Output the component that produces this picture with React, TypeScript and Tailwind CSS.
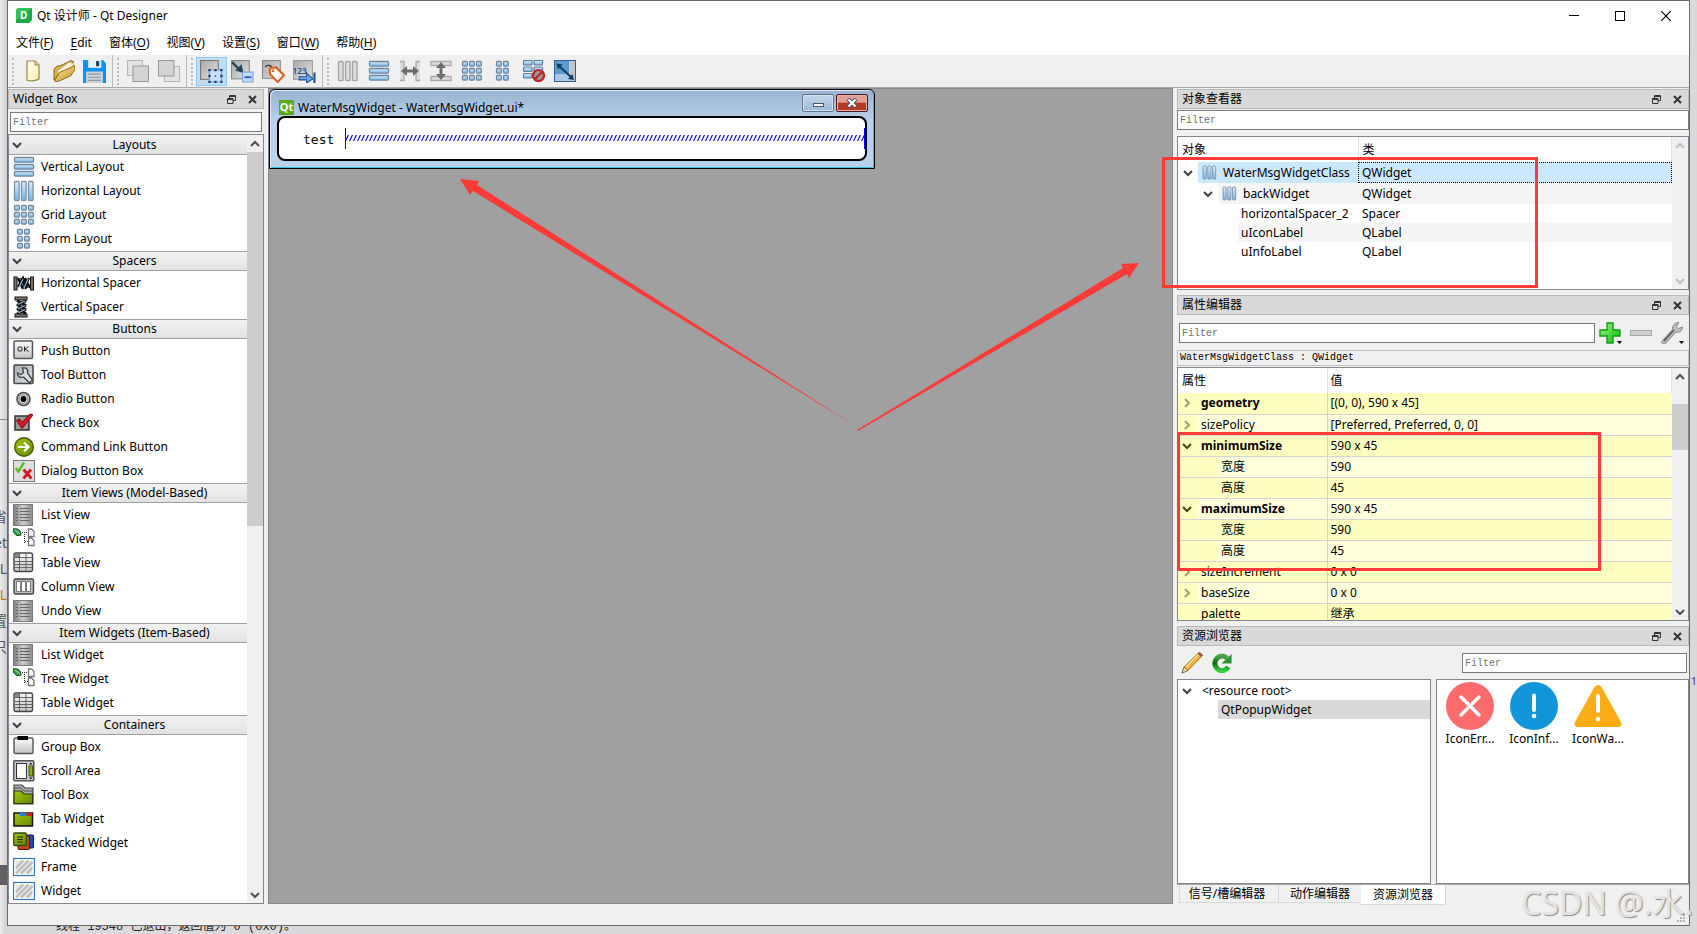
import React from "react";

const RED = "#fc3a38";

// Gradients shared by all the icons
const IconDefs = () => (
  <svg width="0" height="0" className="absolute" aria-hidden="true">
    <defs>
      <linearGradient id="blueBar" x1="0" y1="0" x2="0" y2="1">
        <stop offset="0%" stopColor="#dcf0fd" />
        <stop offset="100%" stopColor="#78b4e0" />
      </linearGradient>
      <linearGradient id="greyBox" x1="0" y1="0" x2="1" y2="1">
        <stop offset="0%" stopColor="#a9a9a9" />
        <stop offset="100%" stopColor="#e2e2e2" />
      </linearGradient>
      <linearGradient id="lightBox" x1="0" y1="0" x2="0" y2="1">
        <stop offset="0%" stopColor="#fafafa" />
        <stop offset="100%" stopColor="#c4c4c4" />
      </linearGradient>
      <linearGradient id="darkBox" x1="0" y1="0" x2="1" y2="0">
        <stop offset="0%" stopColor="#7a7a7a" />
        <stop offset="50%" stopColor="#cfcfcf" />
        <stop offset="100%" stopColor="#8a8a8a" />
      </linearGradient>
      <linearGradient id="gold" x1="0" y1="0" x2="1" y2="1">
        <stop offset="0%" stopColor="#fdebae" />
        <stop offset="100%" stopColor="#c88f1c" />
      </linearGradient>
      <linearGradient id="paper" x1="0" y1="0" x2="1" y2="1">
        <stop offset="0%" stopColor="#ffffff" />
        <stop offset="100%" stopColor="#fbeea0" />
      </linearGradient>
      <linearGradient id="olive" x1="0" y1="0" x2="1" y2="1">
        <stop offset="0%" stopColor="#a2c617" />
        <stop offset="100%" stopColor="#678800" />
      </linearGradient>
      <linearGradient id="plus" x1="0" y1="0" x2="1" y2="1">
        <stop offset="0%" stopColor="#9dfb8c" />
        <stop offset="100%" stopColor="#04b500" />
      </linearGradient>
      <linearGradient id="swirl" x1="0" y1="0" x2="0" y2="1">
        <stop offset="0%" stopColor="#4aa648" />
        <stop offset="50%" stopColor="#0d6c14" />
        <stop offset="100%" stopColor="#35d33c" />
      </linearGradient>
    </defs>
  </svg>
);

const Svg = ({ size = 22, children }: { size?: number; children: React.ReactNode }) => (
  <svg width={size} height={size} viewBox="0 0 22 22" fill="none" className="shrink-0" aria-hidden="true">
    {children}
  </svg>
);

const ColumnBars = ({ grey = false }: { grey?: boolean }) => (
  <>
    {[2, 9, 16].map((x) => (
      <rect key={x} x={x - 0.5} y="1.5" width="4.6" height="19" rx="1" fill={grey ? "#dcdcdc" : "url(#blueBar)"} stroke={grey ? "#a3a3a3" : "#7c90a8"} strokeWidth="1.3" />
    ))}
  </>
);

const RowBars = () => (
  <>
    {[1.5, 8.5, 15.5].map((y) => (
      <rect key={y} x="1.5" y={y} width="19" height="4.6" rx="1" fill="url(#blueBar)" stroke="#6d87a3" strokeWidth="1.3" />
    ))}
  </>
);

const Cells = ({ xs }: { xs: number[] }) => (
  <>
    {xs.map((x) =>
      [1.5, 8.5, 15.5].map((y) => (
        <rect key={`${x}-${y}`} x={x} y={y} width="4.8" height="4.6" rx="1" fill="url(#blueBar)" stroke="#6d87a3" strokeWidth="1.3" />
      ))
    )}
  </>
);

const listIcon = (
  <>
    <rect x="0.5" y="0.5" width="19" height="21" fill="url(#darkBox)" stroke="#7a7a7a" />
    <path d="M3 4.5h2M3 7.5h2M3 10.5h2M3 13.5h2M3 16.5h2M7 4.5h10M7 7.5h10M7 10.5h10M7 13.5h10M7 16.5h10" stroke="#666" strokeWidth="1" />
  </>
);

const treeIcon = (
  <>
    <path d="M0 1c3-1 8 0 8 6-4 2-8-1-8-6z" fill="#3a9a4c" stroke="#0c4a1c" />
    <path d="M2 2l5 4" stroke="#a5dfae" />
    <path d="M9 4.5h6M11.5 6v10M12 13.5h3" stroke="#222" strokeDasharray="1 1" />
    <path d="M15.500 1h3l2.500 2.500V8.500h-5.500zM15.500 10h3l2.500 2.500V17.500h-5.500z" fill="#fff" stroke="#777" strokeWidth="1.3" />
  </>
);

const tableIcon = (
  <>
    <rect x="1" y="1" width="18.500" height="18.500" rx="2" fill="url(#lightBox)" stroke="#444" strokeWidth="1.4" />
    <path d="M1.500 5.500h18M1.500 9.500h18M1.500 12.500h18M1.500 15.500h18M6.500 1.500v18M13 1.500v18" stroke="#666" />
    <rect x="2" y="2" width="4" height="3" fill="#888" />
  </>
);

const stripesIcon = (
  <>
    <rect x="0.5" y="2.500" width="21" height="17" fill="#fff" stroke="#2f77c6" strokeWidth="1.2" />
    <rect x="2.500" y="4.500" width="17" height="13" fill="#e9e9e9" />
    <path d="M3 12l7-7.500M3 17.500L15.500 4.500M8 17.500L19.500 6M14 17.500l5.500-6" stroke="#bdbdbd" strokeWidth="2.500" />
  </>
);

const icons: Record<string, React.ReactNode> = {
  vertical: <RowBars />,
  horizontal: <ColumnBars />,
  grid: <Cells xs={[1.5, 8.5, 15.5]} />,
  form: <Cells xs={[4.5, 11.5]} />,
  hspacer: (
    <>
      <path d="M5 6l5 11M5 15l5-9 4 10M8 6l5 11M12 6l5 10M11 16l5-10" stroke="#111" strokeWidth="2.400" />
      <path d="M6 15l4-8M11 16l4-9" stroke="#8fb4cf" strokeWidth="1.200" />
      <rect x="1" y="5" width="3" height="13" fill="#777" stroke="#111" />
      <rect x="17.500" y="5" width="3" height="13" fill="#777" stroke="#111" />
    </>
  ),
  vspacer: (
    <>
      <path d="M4 4.500l9 5M4 8.500l9 5M4 12.500l9 5M13 4.500L4 9.500M13 9L4 14M13 13l-9 5" stroke="#111" strokeWidth="2.600" />
      <path d="M5 8.500l7-3.500M5 13l7-3.500M5 17l7-3.500" stroke="#8fb4cf" strokeWidth="1.200" />
      <rect x="2" y="1" width="12" height="3" fill="#777" stroke="#111" />
      <rect x="2" y="18" width="12" height="3" fill="#777" stroke="#111" />
    </>
  ),
  push: (
    <>
      <rect x="1" y="1" width="18.500" height="17.500" rx="1.500" fill="url(#lightBox)" stroke="#555" strokeWidth="1.500" />
      <rect x="5" y="7" width="4" height="4" rx="1" stroke="#222" />
      <path d="M11.500 6.500v5M15.500 6.500l-3.500 2.500 3.500 2.500" stroke="#222" />
    </>
  ),
  tool: (
    <>
      <rect x="1" y="1" width="19" height="18.500" rx="1" fill="url(#greyBox)" stroke="#444" strokeWidth="1.500" />
      <path d="M9.500 4c4-1 6 2 5 5l5 7-3 3-6-6c-3 1-6 0-6-4l3.500 1.500 2.500-2z" fill="#d5dade" stroke="#3c444b" strokeWidth="1.300" />
    </>
  ),
  radio: (
    <>
      <circle cx="10.500" cy="11" r="6.500" fill="#e8e8e8" stroke="#4a4a4a" strokeWidth="1.600" />
      <circle cx="10.500" cy="11" r="4.500" stroke="#999" strokeWidth="1.500" />
      <circle cx="10.500" cy="11" r="2.900" fill="#000" />
    </>
  ),
  check: (
    <>
      <rect x="2" y="4" width="14" height="14" fill="#999" stroke="#333" strokeWidth="1.500" />
      <path d="M3.500 8.500l3-1.500 2.500 3.500 8-8.500 3 1-11 13.500z" fill="#d81a20" stroke="#7c090b" />
    </>
  ),
  command: (
    <>
      <circle cx="11" cy="11" r="9.300" fill="url(#olive)" stroke="#475b06" strokeWidth="1.400" />
      <path d="M5 11h10M11 6.500l4.500 4.500-4.500 4.500" stroke="#fff" strokeWidth="2.200" />
    </>
  ),
  dialog: (
    <>
      <rect x="0.500" y="0.500" width="21" height="21" fill="#dedede" stroke="#777" />
      <path d="M2.500 8l3 3.500L11 2.500" stroke="#5cbd25" strokeWidth="2.500" />
      <path d="M10.500 9.500l8 9M18 9.500l-7.500 9" stroke="#cf1c22" strokeWidth="2.800" />
    </>
  ),
  list: listIcon,
  tree: treeIcon,
  table: tableIcon,
  column: (
    <>
      <rect x="1" y="3" width="19.500" height="15" rx="1.500" fill="#bbb" stroke="#444" strokeWidth="1.400" />
      <path d="M3.500 5.500h4v10h-4zM8.500 5.500h4v10h-4zM13.500 5.500h4v10h-4z" fill="#fff" stroke="#777" />
    </>
  ),
  group: (
    <>
      <rect x="1" y="2" width="19" height="15.500" rx="1.500" fill="url(#lightBox)" stroke="#555" strokeWidth="1.400" />
      <rect x="4.500" y="0" width="10.500" height="4" fill="#000" />
    </>
  ),
  scroll: (
    <>
      <rect x="0.800" y="0.800" width="20" height="20" rx="1" fill="#cfcfcf" stroke="#555" strokeWidth="1.500" />
      <rect x="3.500" y="3.500" width="10" height="15" fill="#fff" stroke="#333" />
      <rect x="16" y="6" width="3.500" height="10" fill="#86b30e" stroke="#415909" />
      <path d="M16 4.500l1.700-2 1.800 2zM16 17.500l1.700 2 1.800-2z" fill="#111" />
    </>
  ),
  toolbox: (
    <>
      <path d="M1 1h8l3 3h8v16H1z" fill="#aaa" stroke="#444" strokeWidth="1.200" />
      <path d="M1 4h7l3 3h9" stroke="#555" />
      <path d="M1 7h7l3 3h8.500v9.500H1z" fill="url(#olive)" stroke="#2e3d05" strokeWidth="1.200" />
    </>
  ),
  tab: (
    <>
      <rect x="1" y="5" width="18.500" height="13" fill="url(#olive)" stroke="#111" strokeWidth="1.500" />
      <rect x="7" y="4.500" width="6" height="3.500" fill="#1686e0" />
      <rect x="13.500" y="4.500" width="5.500" height="3.500" fill="#d91c1c" />
    </>
  ),
  stacked: (
    <>
      <rect x="9" y="3" width="11.500" height="13" rx="1" fill="#1f4ab8" stroke="#0c1c52" />
      <rect x="5" y="4" width="11.500" height="13.500" rx="1" fill="#c34a13" stroke="#4c1a04" />
      <rect x="0.800" y="1" width="12.500" height="12.500" rx="1" fill="url(#olive)" stroke="#35460a" strokeWidth="1.300" />
      <path d="M4 5h6M4 7.500h6M4 10h6" stroke="#223005" strokeWidth="1.200" />
    </>
  ),
  stripes: stripesIcon,

  // toolbar
  newFile: (
    <>
      <path d="M5 1h8l4 4v14c-3 2-8 2-12 1.500z" fill="url(#paper)" stroke="#9b8645" strokeWidth="1.200" />
      <path d="M13 1v4h4" fill="#f2dd8a" stroke="#9b8645" />
    </>
  ),
  open: (
    <>
      <path d="M1 20V9l3-3 3 0 11-5.500 3 1.500-12 8z" fill="#ddb14b" stroke="#8f6b1b" />
      <path d="M4 11l12-9 4 1v4L7 17z" fill="#fbf4d8" stroke="#b99b55" strokeWidth="0.800" />
      <path d="M1.500 21l5-8.500L22 5.500v4l-4.500 6.500L5 21.500z" fill="url(#gold)" stroke="#8f6b1b" />
    </>
  ),
  save: (
    <>
      <path d="M0 0h19l3 3v19H0z" fill="#0a93f5" />
      <rect x="5" y="0" width="12.500" height="7.500" fill="#e9eef2" />
      <rect x="12.500" y="1" width="3" height="5" fill="#1d4162" />
      <rect x="3" y="11" width="16" height="11" fill="#ccd3d8" />
      <path d="M5 13.500h12M5 16.500h12M5 19.500h12" stroke="#8e979e" />
    </>
  ),
  back: (
    <>
      <rect x="0.500" y="0.500" width="15" height="15" fill="#e4e4e4" stroke="#b5b5b5" />
      <rect x="6" y="6" width="15.500" height="15.500" fill="#d4d4d4" stroke="#989898" />
    </>
  ),
  front: (
    <>
      <rect x="6.500" y="6.500" width="15" height="15" fill="#e4e4e4" stroke="#b5b5b5" />
      <rect x="0.500" y="0.500" width="15.500" height="15.500" fill="#d4d4d4" stroke="#989898" />
    </>
  ),
  editWidgets: (
    <>
      <rect x="0.500" y="0.500" width="17" height="18" fill="url(#greyBox)" stroke="#777" />
      <rect x="9" y="9.500" width="11.500" height="11.500" fill="#c9e0fd" stroke="#7c9fd4" />
      <path d="M8 8.500h2.200v2.200H8zM13.700 8.500h2.200v2.200h-2.200zM19.400 8.500h2.200v2.200h-2.200zM8 14.200h2.200v2.200H8zM19.400 14.200h2.200v2.200h-2.200zM8 19.800h2.200V22H8zM13.700 19.800h2.200V22h-2.200zM19.400 19.800h2.200V22h-2.200z" fill="#1b3d6c" />
      <rect x="14.200" y="14.700" width="1.300" height="1.300" fill="#1b3d6c" />
    </>
  ),
  editSignals: (
    <>
      <rect x="0.500" y="0.500" width="17" height="17.500" fill="url(#greyBox)" stroke="#888" />
      <path d="M1 2l8 8" stroke="#25445e" strokeWidth="2.200" />
      <path d="M12 12.500l-8-2.500 6-6z" fill="#25445e" />
      <rect x="11" y="11.500" width="10" height="9.500" fill="#c3dcfb" stroke="#7c9fd4" />
      <path d="M13 16.500h6.500" stroke="#2b62b8" strokeWidth="1.800" />
    </>
  ),
  editBuddies: (
    <>
      <rect x="0.500" y="0.500" width="17" height="17" fill="url(#greyBox)" stroke="#888" />
      <path d="M3 6.500c4-3 7-1 7 4" stroke="#444" strokeWidth="1.400" />
      <path d="M7.500 8v5.500l7.500 7.500 6-6.500L13.500 7z" fill="#fff" stroke="#d5672c" strokeWidth="2.200" />
      <circle cx="10.500" cy="10.500" r="1.300" fill="#d5672c" />
    </>
  ),
  tabOrder: (
    <>
      <rect x="0.500" y="0.500" width="18" height="18" fill="url(#greyBox)" stroke="#999" />
      <path d="M6 16h7v-3.500l6 5.500-6 4v-3H6z" fill="#6ca6f0" stroke="#1e4f9e" />
      <path d="M20.500 12v10" stroke="#1e4f9e" strokeWidth="2" />
      <text x="-0.500" y="13" fontSize="8" fontWeight="600" fill="#164a94" fontFamily="Open Sans, sans-serif">123</text>
    </>
  ),
  greyColumns: <ColumnBars grey />,
  splitH: (
    <>
      <path d="M1 1.500h4v19H1M21 1.500h-4v19h4M5 1.500v19M17 1.500v19" fill="#ddd" stroke="#aaa" strokeWidth="1.300" />
      <path d="M2 11l6-5v3.500h6V6l6 5-6 5v-3.500H8V16z" fill="#6d6d6d" />
    </>
  ),
  splitV: (
    <>
      <path d="M1 1.500h20v4H1zM1 16.500h20v4H1z" fill="#ddd" stroke="#aaa" strokeWidth="1.300" />
      <path d="M11 2l5 6h-3.500v6H16l-5 6-5-6h3.500V8H6z" fill="#6d6d6d" />
    </>
  ),
  breakLayout: (
    <>
      {[0, 6.5, 13].map((y) => (
        <React.Fragment key={y}>
          <rect x="0.500" y={y + 0.5} width="8.500" height="4.500" rx="1" fill="url(#blueBar)" stroke="#5f7c9b" strokeWidth="1.200" />
          <rect x="11" y={y + 0.5} width="8.500" height="4.500" rx="1" fill="url(#blueBar)" stroke="#5f7c9b" strokeWidth="1.200" />
        </React.Fragment>
      ))}
      <circle cx="15.500" cy="15.500" r="5.500" fill="#999" stroke="#c4232b" strokeWidth="2.200" />
      <path d="M12 19l7-7" stroke="#c4232b" strokeWidth="2.200" />
    </>
  ),
  adjust: (
    <>
      <rect x="0.500" y="0.500" width="21" height="21" fill="#dbe6ef" stroke="#315f93" />
      <path d="M1 1h14v13H1z" fill="#5b9bd0" />
      <path d="M15 1h6v20h-6z" fill="#c2c6ca" />
      <path d="M1 14h14v7H1z" fill="#a9c7e2" />
      <path d="M4 5l14 13" stroke="#0c3c63" strokeWidth="1.800" />
      <path d="M2.500 3.500l6 1-4.500 5zM20 20l-6-1 4.500-5z" fill="#0c3c63" />
    </>
  ),
};

const Icon = ({ name, size = 22 }: { name: string; size?: number }) => <Svg size={size}>{icons[name]}</Svg>;

const Chevron = ({ dir = "down", color = "#404040" }: { dir?: "down" | "up" | "right"; color?: string }) => {
  const d = { down: "M1 3l4 4 4-4", up: "M1 7l4-4 4 4", right: "M3 1l4 4-4 4" }[dir];
  return (
    <svg width="10" height="10" viewBox="0 0 10 10" fill="none" className="shrink-0" aria-hidden="true">
      <path d={d} stroke={color} strokeWidth="2" />
    </svg>
  );
};

const menus = [
  ["文件(", "F", ")"],
  ["", "E", "dit"],
  ["窗体(", "O", ")"],
  ["视图(", "V", ")"],
  ["设置(", "S", ")"],
  ["窗口(", "W", ")"],
  ["帮助(", "H", ")"],
];

const toolGroups = [
  [["newFile", "新建"], ["open", "打开"], ["save", "保存"]],
  [["back", "置后"], ["front", "置前"]],
  [["editWidgets", "编辑窗口部件"], ["editSignals", "编辑信号/槽"], ["editBuddies", "编辑伙伴"], ["tabOrder", "编辑 Tab 顺序"]],
  [
    ["greyColumns", "水平布局"],
    ["vertical", "垂直布局"],
    ["splitH", "使用分裂器水平布局"],
    ["splitV", "使用分裂器垂直布局"],
    ["grid", "栅格布局"],
    ["form", "在窗体布局中布局"],
    ["breakLayout", "打破布局"],
    ["adjust", "调整大小"],
  ],
];

const widgetSections = [
  {
    title: "Layouts",
    items: [["vertical", "Vertical Layout"], ["horizontal", "Horizontal Layout"], ["grid", "Grid Layout"], ["form", "Form Layout"]],
  },
  { title: "Spacers", items: [["hspacer", "Horizontal Spacer"], ["vspacer", "Vertical Spacer"]] },
  {
    title: "Buttons",
    items: [
      ["push", "Push Button"],
      ["tool", "Tool Button"],
      ["radio", "Radio Button"],
      ["check", "Check Box"],
      ["command", "Command Link Button"],
      ["dialog", "Dialog Button Box"],
    ],
  },
  {
    title: "Item Views (Model-Based)",
    items: [["list", "List View"], ["tree", "Tree View"], ["table", "Table View"], ["column", "Column View"], ["list", "Undo View"]],
  },
  {
    title: "Item Widgets (Item-Based)",
    items: [["list", "List Widget"], ["tree", "Tree Widget"], ["table", "Table Widget"]],
  },
  {
    title: "Containers",
    items: [
      ["group", "Group Box"],
      ["scroll", "Scroll Area"],
      ["toolbox", "Tool Box"],
      ["tab", "Tab Widget"],
      ["stacked", "Stacked Widget"],
      ["stripes", "Frame"],
      ["stripes", "Widget"],
    ],
  },
];

type Prop = { name: string; value: string; kind: "open" | "closed" | "leaf" | "child"; bold?: boolean };

const properties: Prop[] = [
  { name: "geometry", value: "[(0, 0), 590 x 45]", kind: "closed", bold: true },
  { name: "sizePolicy", value: "[Preferred, Preferred, 0, 0]", kind: "closed" },
  { name: "minimumSize", value: "590 x 45", kind: "open", bold: true },
  { name: "宽度", value: "590", kind: "child" },
  { name: "高度", value: "45", kind: "child" },
  { name: "maximumSize", value: "590 x 45", kind: "open", bold: true },
  { name: "宽度", value: "590", kind: "child" },
  { name: "高度", value: "45", kind: "child" },
  { name: "sizeIncrement", value: "0 x 0", kind: "closed" },
  { name: "baseSize", value: "0 x 0", kind: "closed" },
  { name: "palette", value: "继承", kind: "leaf" },
];

const DockTitle = ({ title }: { title: string }) => (
  <div className="flex h-5 shrink-0 items-center border border-[#bababa] bg-[#d9d9d9] pl-1">
    <h2 className="flex-1">{title}</h2>
    <button aria-label="浮动" className="flex w-5 justify-center">
      <svg width="9" height="9" viewBox="0 0 9 9" fill="none" stroke="#333">
        <path d="M2.500 3V.5h6v5H6M2.500 1.500h6M.5 3.500H6v5H.500zM.500 4.500H6" />
      </svg>
    </button>
    <button aria-label="关闭" className="flex w-[22px] justify-center">
      <svg width="9" height="9" viewBox="0 0 9 9" fill="none" stroke="#333" strokeWidth="2">
        <path d="M1 1l7 7M8 1L1 8" />
      </svg>
    </button>
  </div>
);

const FilterInput = ({ label, className = "" }: { label: string; className?: string }) => (
  <input
    aria-label={label}
    placeholder="Filter"
    className={`h-5 min-w-0 border border-[#7a7a7a] bg-white px-[2px] font-['Liberation_Mono',monospace] text-[10px] text-black outline-none placeholder:text-[#707070] ${className}`}
  />
);

const ScrollBar = ({ before, thumb, disabled = false }: { before: string; thumb: string; disabled?: boolean }) => (
  <div className="flex w-4 shrink-0 flex-col items-center bg-[#f0f0f0]">
    <div className="flex h-[17px] items-center">
      <Chevron dir="up" color={disabled ? "#bfbfbf" : "#505050"} />
    </div>
    <div className={before} />
    <div className={`w-full bg-[#cdcdcd] ${thumb}`} />
    <div className="flex-1" />
    <div className="flex h-[17px] items-center">
      <Chevron color={disabled ? "#bfbfbf" : "#505050"} />
    </div>
  </div>
);

const WidgetBox = () => (
  <aside className="flex w-64 shrink-0 flex-col pt-px">
    <DockTitle title="Widget Box" />
    <FilterInput label="Filter widgets" className="mx-[2px] mt-[3px]" />
    <div className="mt-[2px] flex min-h-0 flex-1 border border-[#828790] bg-white">
      <div className="min-w-0 flex-1 overflow-hidden">
        {widgetSections.map((section, i) => (
          <section key={section.title}>
            <button
              className={`flex h-5 w-full items-center border-b border-[#a0a0a0] bg-linear-to-b from-[#f2f2f2] to-[#e2e2e2] pl-[3px] ${
                i > 0 ? "border-t" : ""
              }`}
            >
              <Chevron />
              <span className="flex-1 text-center">{section.title}</span>
            </button>
            {section.items.map(([icon, name]) => (
              <button key={name} className="flex h-6 w-full items-center gap-[6px] pl-1">
                <Icon name={icon} />
                {name}
              </button>
            ))}
          </section>
        ))}
      </div>
      <ScrollBar before="" thumb="h-[374px]" />
    </div>
  </aside>
);

const FormWindow = () => (
  <div className="absolute top-0 left-0 w-[606px] rounded-t-md border border-black bg-linear-to-b from-[#99b4d1] to-[#b9d1ea] to-40% shadow-[inset_1px_1px_0_#dfeaf5,inset_-1px_-1px_0_#35c3dc]">
    <div className="flex h-[26px] items-center gap-1 pr-[6px] pl-[9px]">
      <span className="mt-2 flex h-[15px] w-[15px] items-center justify-center bg-[#5caa15] text-[11px] font-bold text-white">Qt</span>
      <span className="mt-[10px] flex-1 leading-4">WaterMsgWidget - WaterMsgWidget.ui*</span>
      <button aria-label="最小化" className="flex h-[18px] w-8 items-center justify-center rounded-xs border border-[#5f7488] bg-linear-to-b from-[#c3d6e9] to-[#9db8d5] shadow-[inset_0_0_0_1px_#d4e3f1]">
        <span className="mt-1 h-1 w-[11px] border border-[#555] bg-white" />
      </button>
      <button aria-label="关闭" className="-ml-[2px] flex h-[18px] w-8 items-center justify-center rounded-xs border border-[#4d1420] bg-linear-to-b from-[#e0a093] from-45% to-[#b93a24] to-50% shadow-[inset_0_0_0_1px_#e6b4aa]">
        <svg width="12" height="10" viewBox="0 0 12 10" fill="none">
          <path d="M2 1l8 8M10 1L2 9" stroke="#4a4a55" strokeWidth="4" />
          <path d="M2.500 1.500l7 7M9.500 1.500l-7 7" stroke="#fff" strokeWidth="2.200" />
        </svg>
      </button>
    </div>
    <div className="mx-[7px] mb-[7px] flex h-[45px] items-center rounded-lg border-2 border-black bg-white pl-6">
      <span className="w-[42px] pt-[3px] font-['DejaVu_Sans_Mono',monospace] text-[13px]">test</span>
      <svg height="21" className="min-w-0 flex-1" aria-hidden="true">
        <defs>
          <pattern id="spring" width="4" height="6" patternUnits="userSpaceOnUse" y="7">
            <path d="M.5 6L3.500 0" stroke="#0000e8" strokeWidth="1.200" />
          </pattern>
        </defs>
        <rect y="7" width="100%" height="6" fill="url(#spring)" />
        <rect width="1" height="21" fill="#0000ff" />
      </svg>
      <span className="h-[21px] w-px bg-[#0000ff]" />
    </div>
  </div>
);

const Workspace = () => (
  <main className="relative ml-1 min-w-0 flex-1 overflow-hidden border border-[#828790] bg-[#a0a0a0]">
    <FormWindow />
    <svg width="905" height="816" viewBox="269 89 905 816" className="pointer-events-none absolute top-0 left-0" fill={RED} aria-hidden="true">
      <path d="M460 179l19 2-2 4L857 427 473 191l-3 4z" />
      <path d="M1139 263l-10 15-2-4L858 431l-1-1L1123 268l-2-4z" />
    </svg>
  </main>
);

const objectRows = [
  { name: "WaterMsgWidgetClass", type: "QWidget" },
  { name: "backWidget", type: "QWidget" },
  { name: "horizontalSpacer_2", type: "Spacer" },
  { name: "uIconLabel", type: "QLabel" },
  { name: "uInfoLabel", type: "QLabel" },
];

const ObjectInspector = () => (
  <section className="relative">
    <DockTitle title="对象查看器" />
    <FilterInput label="Filter objects" className="mt-px w-full" />
    <div className="mt-[6px] flex h-[154px] border border-[#828790] bg-white">
      <div className="min-w-0 flex-1">
        <table className="w-full table-fixed border-collapse text-left">
          <thead>
            <tr className="h-[25px]">
              <th className="w-[180px] border-r border-[#e0e0e0] pl-1 font-normal">对象</th>
              <th className="border-r border-[#e0e0e0] pl-1 font-normal">类</th>
            </tr>
          </thead>
          <tbody>
            {objectRows.map((row, i) => {
              const fill = i === 0 ? "bg-[#cce8ff]" : i % 2 ? "bg-[#f5f5f5]" : "";
              return (
                <tr key={row.name} className={i < 2 ? "h-[21px]" : "h-[19px]"}>
                  <td className="p-0">
                    <div className="flex h-full">
                      {i === 0 && <span className="flex w-5 items-center justify-center"><Chevron /></span>}
                      {i === 1 && <span className="flex w-10 items-center justify-end pr-[5px]"><Chevron /></span>}
                      {i > 1 && <span className="w-[60px] shrink-0" />}
                      <span
                        className={`flex min-w-0 flex-1 items-center gap-[6px] whitespace-nowrap ${
                          i < 2 ? "h-[21px] pl-1" : "h-[19px] pl-[3px]"
                        } ${fill}`}
                      >
                        {i < 2 && <Icon name="horizontal" size={15} />}
                        {row.name}
                      </span>
                    </div>
                  </td>
                  <td className={`py-0 pl-1 ${fill} ${i === 0 ? "outline-1 -outline-offset-1 outline-dotted outline-black" : ""}`}>{row.type}</td>
                </tr>
              );
            })}
          </tbody>
        </table>
      </div>
      <ScrollBar before="" thumb="h-0" disabled />
    </div>
    <div className="pointer-events-none absolute top-[68px] -left-[15px] h-[131px] w-[376px] border-3 border-[#fc3a38]" />
  </section>
);

const PropertyEditor = () => (
  <section className="mt-[5px]">
    <DockTitle title="属性编辑器" />
    <div className="flex items-center pt-[7px] pr-1 pb-[5px] pl-[2px]">
      <FilterInput label="Filter properties" className="flex-1" />
      <button aria-label="添加动态属性" className="flex w-[31px] items-end pl-1">
        <Svg>
          <path d="M8 1h6v7h7v6h-7v7H8v-7H1V8h7z" fill="url(#plus)" stroke="#0b9a13" strokeWidth="1.300" />
        </Svg>
        <svg width="5" height="3" viewBox="0 0 5 3" className="-ml-1"><path d="M0 0h5L2.500 3z" /></svg>
      </button>
      <button aria-label="删除动态属性" className="flex w-[31px] pl-1">
        <Svg>
          <rect x="0.500" y="8.500" width="21" height="5" fill="#cfcfcf" stroke="#a8a8a8" />
        </Svg>
      </button>
      <button aria-label="配置属性编辑器" className="flex w-7 items-end pl-1">
        <Svg>
          <path d="M1 19l10.500-11.500c-.5-4 2.500-7 6.500-7l-2.500 4 2 2 4-1.500c0 4-3 6-6.500 5L4 22c-2 1-4-1-3-3z" fill="#b9bcbe" stroke="#858889" />
          <path d="M3 19L13 8" stroke="#555" strokeWidth="1.500" />
        </Svg>
        <svg width="5" height="3" viewBox="0 0 5 3" className="-ml-1"><path d="M0 0h5L2.500 3z" /></svg>
      </button>
    </div>
    <p className="mt-px h-4 border border-[#c0c0c0] px-[2px] font-['Liberation_Mono',monospace] text-[10px] leading-[14px] whitespace-pre">
      WaterMsgWidgetClass : QWidget
    </p>
    <div className="relative mt-px">
      <div className="flex h-[254px] border border-[#828790] bg-white">
        <div className="min-w-0 flex-1 overflow-hidden">
          <table className="w-full table-fixed border-collapse text-left">
            <thead>
              <tr className="h-[25px]">
                <th className="w-[149px] border-r border-[#e0e0e0] pl-1 font-normal">属性</th>
                <th className="border-r border-[#e0e0e0] pl-[3px] font-normal">值</th>
              </tr>
            </thead>
            <tbody>
              {properties.map((p, i) => {
                const fill = i % 2 ? "bg-[#ffffdc]" : "bg-[#ffffbf]";
                return (
                  <tr key={i} className="h-[21px] border-b border-[#d4d4d4]">
                    <td className="border-r border-[#d4d4d4] bg-[#ffffbf] p-0">
                      <div className="flex">
                        <span className={`flex h-5 shrink-0 items-center pl-1 ${p.kind === "child" ? "w-10" : "w-5"}`}>
                          {p.kind === "open" && <Chevron color="#44440f" />}
                          {p.kind === "closed" && <Chevron dir="right" color="#9f9f77" />}
                        </span>
                        <span className={`h-5 flex-1 pl-[3px] leading-5 ${fill} ${p.bold ? "font-bold" : ""}`}>{p.name}</span>
                      </div>
                    </td>
                    <td className={`py-0 pl-[3px] leading-5 ${fill}`}>{p.value}</td>
                  </tr>
                );
              })}
            </tbody>
          </table>
        </div>
        <ScrollBar before="h-[19px]" thumb="h-[46px]" />
      </div>
      <div className="pointer-events-none absolute top-[65px] left-0 h-[139px] w-[424px] border-3 border-[#fc3a38]" />
    </div>
  </section>
);

const resources = [
  {
    label: "IconErr...",
    icon: (
      <>
        <circle cx="24" cy="24" r="24" fill="#fd6c6c" />
        <path d="M15 15l18 18M33 15L26.500 21.500M21.500 26.500L15 33" stroke="#fff" strokeWidth="3.500" strokeLinecap="round" />
      </>
    ),
  },
  {
    label: "IconInf...",
    icon: (
      <>
        <circle cx="24" cy="24" r="24" fill="#1296db" />
        <path d="M24 13.500v14.500" stroke="#fff" strokeWidth="4" strokeLinecap="round" />
        <circle cx="24" cy="34" r="2.300" fill="#fff" />
      </>
    ),
  },
  {
    label: "IconWa...",
    icon: (
      <>
        <path d="M20.500 5q3.500-4 7 0l19.500 35q2 5-4 5H5q-6 0-4-5z" fill="#faad14" />
        <path d="M24 14v15" stroke="#fff" strokeWidth="4" strokeLinecap="round" />
        <circle cx="24" cy="37" r="2.300" fill="#fff" />
      </>
    ),
  },
];

const ResourceBrowser = () => (
  <section className="mt-[5px] flex min-h-0 flex-1 flex-col">
    <DockTitle title="资源浏览器" />
    <div className="flex items-center pt-[6px] pr-[2px] pb-1 pl-1">
      <button aria-label="编辑资源" className="w-[31px]">
        <Svg>
          <path d="M1 21l2-6L17 1.500l3.500 3L7 18.500z" fill="#edb33c" stroke="#a87415" />
          <path d="M5 15L17.500 2.500" stroke="#fbe09a" strokeWidth="1.500" />
          <path d="M17 1.500l1.500-1 3 2.500-1 1.500z" fill="#c3644a" stroke="#8d4029" />
          <path d="M1 21l2-6 4 3.500z" fill="#efd9ae" stroke="#7a6543" strokeWidth="0.800" />
        </Svg>
      </button>
      <button aria-label="重新加载">
        <Svg size={20}>
          <path d="M18 15.500A8 8 0 1 1 16.500 5.500" stroke="url(#swirl)" strokeWidth="5.500" />
          <path d="M21.500 1v10.500H10.500z" fill="#2c9334" />
        </Svg>
      </button>
      <span className="flex-1" />
      <FilterInput label="Filter resources" className="w-[225px]" />
    </div>
    <div className="mt-px flex min-h-0 flex-1 gap-[5px]">
      <ul className="w-[254px] border border-[#828790] bg-white py-px">
        <li>
          <div className="flex h-[19px] items-center gap-2 pl-1">
            <Chevron />
            <span className="pl-[2px]">&lt;resource root&gt;</span>
          </div>
          <ul className="pl-10">
            <li className="bg-[#d9d9d9] pl-[3px] leading-[19px]">QtPopupWidget</li>
          </ul>
        </li>
      </ul>
      <ul className="flex flex-1 items-start border border-[#828790] bg-white pt-[2px] pl-px">
        {resources.map((r) => (
          <li key={r.label} className="flex w-16 flex-col items-center">
            <svg width="48" height="48" viewBox="0 0 48 48" fill="none" aria-hidden="true">
              {r.icon}
            </svg>
            <span className="leading-[18px]">{r.label}</span>
          </li>
        ))}
      </ul>
    </div>
    <div className="flex h-5 items-start border-t border-[#a8a8ad] pl-[2px]">
      <button className="h-[18px] w-[100px] border-r border-b border-l border-[#d9d9d9] pr-1 leading-4">信号/槽编辑器</button>
      <button className="h-[18px] w-[82px] border-b border-[#d9d9d9] leading-4">动作编辑器</button>
      <button className="h-5 w-[85px] border-r border-b border-[#d9d9d9] bg-white leading-[18px]">资源浏览器</button>
    </div>
  </section>
);

// Slivers of the editor that sits behind the window
const Backdrop = () => (
  <div aria-hidden="true">
    <div className="absolute top-0 left-0 flex h-full w-[7px] flex-col bg-linear-to-r from-[#ececec] to-[#cfcfd2]">
      <span className="h-[420px] border-b border-[#8d8d8d]" />
      <span className="mt-[445px] h-5 bg-[#606060]" />
    </div>
    <div className="absolute top-[504px] left-0 flex w-[7px] flex-col items-end overflow-hidden text-[14px] leading-[26px] text-[#555]">
      <span>省</span>
      <span>et</span>
      <span>nL</span>
      <span className="text-[#c47a1c]">L</span>
      <span>置</span>
      <span>只</span>
    </div>
    <div className="absolute bottom-0 left-14 h-2 overflow-hidden whitespace-nowrap text-[#222]">
      <p className="-mt-[7px] font-['Liberation_Mono','Noto_Sans_CJK_SC',monospace]">线程 19548 已退出，返回值为 0 (0x0)。</p>
    </div>
    <span className="absolute top-[673px] right-0 text-[11px] text-[#4b2a8a]">1</span>
  </div>
);

export default function App() {
  return (
    <div className="relative h-screen w-full overflow-hidden bg-[#d9d9dc] pr-[7px] pb-2 pl-[7px] font-['Noto_Sans','Noto_Sans_CJK_SC',sans-serif] text-[12px] leading-4 text-black">
      <IconDefs />
      <Backdrop />

      <div className="relative flex h-full flex-col border border-[#6b6b6b] bg-[#f0f0f0]">
        <header className="bg-white">
          <div className="flex h-[29px] items-center pl-2">
            <svg width="16" height="15" viewBox="0 0 16 15" className="mr-[5px]" aria-hidden="true">
              <path d="M2 0h14v12l-3 3H0V2z" fill="#21a84a" />
              <path d="M2 0h14L0 12V2z" fill="#34c25c" />
              <text x="4" y="11" fontSize="10" fontWeight="700" fill="#fff" fontFamily="Open Sans, sans-serif">D</text>
            </svg>
            <h1 className="flex-1">Qt 设计师 - Qt Designer</h1>
            <button aria-label="最小化" className="flex w-[46px] justify-center">
              <span className="h-px w-[10px] bg-black" />
            </button>
            <button aria-label="最大化" className="flex w-[46px] justify-center">
              <span className="h-[10px] w-[10px] border border-black" />
            </button>
            <button aria-label="关闭" className="flex w-[46px] justify-center">
              <svg width="10" height="10" viewBox="0 0 10 10" stroke="#000" strokeWidth="1.200">
                <path d="M0 0l10 10M10 0L0 10" />
              </svg>
            </button>
          </div>
          <nav className="flex h-[25px] items-center gap-[17px] pl-2">
            {menus.map(([a, key, b]) => (
              <button key={key}>
                {a}
                <u className="underline-offset-2">{key}</u>
                {b}
              </button>
            ))}
          </nav>
        </header>

        <div className="flex h-[33px] items-center border-b border-[#a8a8a8]">
          {toolGroups.map((group, i) => (
            <div key={i} className={`flex h-full items-center pr-[2px] ${i < 3 ? "border-r border-[#bdbdbd]" : ""}`}>
              <span className="flex w-[9px] justify-center">
                <span className="h-[27px] border-l-2 border-dotted border-[#bcbcbc]" />
              </span>
              {group.map(([icon, label]) => (
                <button
                  key={icon}
                  aria-label={label}
                  className={`flex h-[29px] w-[31px] items-center justify-center ${
                    icon === "editWidgets" ? "border border-[#92c8f5] bg-[#c0dcf3]" : ""
                  }`}
                >
                  <Icon name={icon} size={icon === "save" || i === 2 ? 23 : 22} />
                </button>
              ))}
            </div>
          ))}
        </div>

        <div className="flex min-h-0 flex-1">
          <WidgetBox />
          <Workspace />
          <div className="ml-1 flex w-[512px] shrink-0 flex-col pt-px">
            <ObjectInspector />
            <PropertyEditor />
            <ResourceBrowser />
          </div>
        </div>

        <footer className="relative h-[21px] shrink-0">
          <svg width="9" height="9" viewBox="0 0 9 9" fill="#b5b5b5" className="absolute right-[3px] bottom-[2px]" aria-hidden="true">
            <path d="M6 0h2v2H6zM3 3h2v2H3zM6 3h2v2H6zM0 6h2v2H0zM3 6h2v2H3zM6 6h2v2H6z" />
          </svg>
          <span className="absolute -right-1 bottom-1 text-[32px] leading-9 whitespace-nowrap text-[#e4e4e4] [text-shadow:1px_1px_1px_#8a8a8a]">CSDN @.水.</span>
        </footer>
      </div>
    </div>
  );
}
